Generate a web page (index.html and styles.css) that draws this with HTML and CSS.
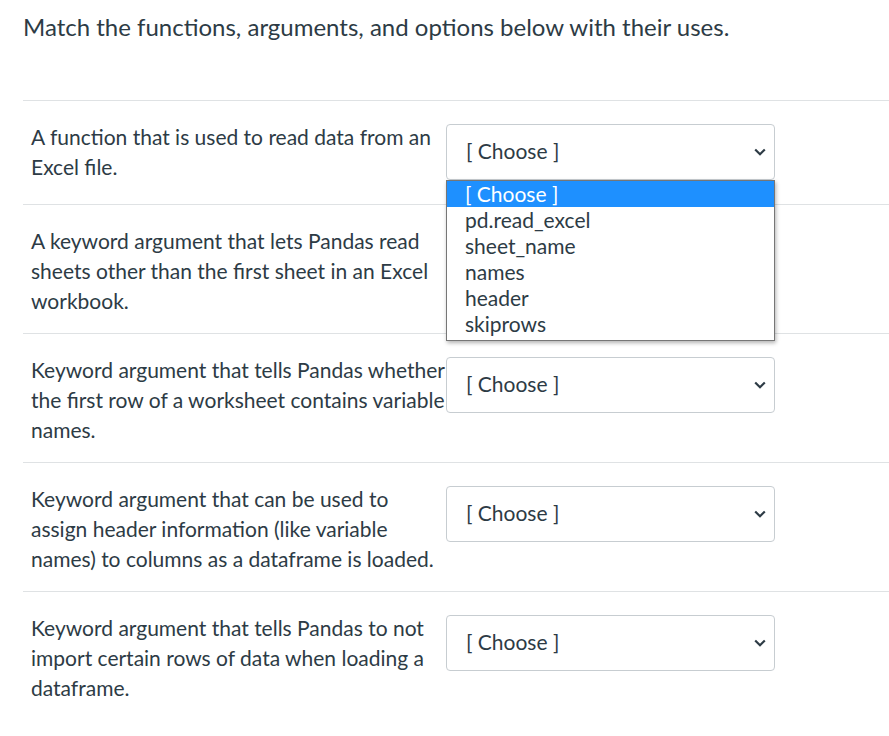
FILE: index.html
```html
<!DOCTYPE html>
<html lang="en">
<head>
    <meta charset="UTF-8">
    <meta name="viewport" content="width=device-width, initial-scale=1.0">
    <title>Matching Question</title>
    <link rel="stylesheet" href="styles.css">
</head>
<body>

    <div class="question">
        <p class="prompt">Match the functions, arguments, and options below with their uses.</p>

        <div class="answers">
            <!-- Row 1 (dropdown open) -->
            <div class="answer">
                <div class="answer-text">A function that is used to read data from an Excel file.</div>
                <div class="answer-select">
                    <div class="select">
                        <span>[ Choose ]</span>
                        <svg class="chevron" width="12" height="8" viewBox="0 0 12 8"><path d="M1.2 1.5 L6 6.2 L10.8 1.5" fill="none" stroke="#2d3b45" stroke-width="2.2"/></svg>
                    </div>
                    <ul class="options">
                        <li class="selected">[ Choose ]</li>
                        <li>pd.read_excel</li>
                        <li>sheet_name</li>
                        <li>names</li>
                        <li>header</li>
                        <li>skiprows</li>
                    </ul>
                </div>
            </div>

            <!-- Row 2 -->
            <div class="answer">
                <div class="answer-text">A keyword argument that lets Pandas read sheets other than the first sheet in an Excel workbook.</div>
                <div class="answer-select"></div>
            </div>

            <!-- Row 3 -->
            <div class="answer">
                <div class="answer-text">Keyword argument that tells Pandas whether the first row of a worksheet contains variable names.</div>
                <div class="answer-select">
                    <div class="select">
                        <span>[ Choose ]</span>
                        <svg class="chevron" width="12" height="8" viewBox="0 0 12 8"><path d="M1.2 1.5 L6 6.2 L10.8 1.5" fill="none" stroke="#2d3b45" stroke-width="2.2"/></svg>
                    </div>
                </div>
            </div>

            <!-- Row 4 -->
            <div class="answer">
                <div class="answer-text">Keyword argument that can be used to assign header information (like variable names) to columns as a dataframe is loaded.</div>
                <div class="answer-select">
                    <div class="select">
                        <span>[ Choose ]</span>
                        <svg class="chevron" width="12" height="8" viewBox="0 0 12 8"><path d="M1.2 1.5 L6 6.2 L10.8 1.5" fill="none" stroke="#2d3b45" stroke-width="2.2"/></svg>
                    </div>
                </div>
            </div>

            <!-- Row 5 -->
            <div class="answer">
                <div class="answer-text">Keyword argument that tells Pandas to not import certain rows of data when loading a dataframe.</div>
                <div class="answer-select">
                    <div class="select">
                        <span>[ Choose ]</span>
                        <svg class="chevron" width="12" height="8" viewBox="0 0 12 8"><path d="M1.2 1.5 L6 6.2 L10.8 1.5" fill="none" stroke="#2d3b45" stroke-width="2.2"/></svg>
                    </div>
                </div>
            </div>
        </div>
    </div>

</body>
</html>
```

FILE: styles.css
```css
body {
    font-family: Lato, "Open Sans", sans-serif;
    color: #2d3b45;
    background-color: #ffffff;
    margin: 0;
    overflow: hidden;
}

.question {
    padding-left: 23px;
}

.prompt {
    font-size: 24px;
    line-height: 30px;
    margin: 12px 0 58px 0;
}

.answer {
    display: flex;
    border-top: 1px solid #dfe2e4;
    padding: 21px 0 17px 8px;
}

.answer-text {
    width: 415px;
    flex-shrink: 0;
    font-size: 21px;
    line-height: 30px;
}

.answer-select {
    position: relative;
    width: 329px;
    padding: 2px 0 7px 0;
}

.select {
    box-sizing: border-box;
    height: 56px;
    border: 1px solid #c7cdd1;
    border-radius: 4px;
    display: flex;
    align-items: center;
    justify-content: space-between;
    padding: 0 8px 3px 19px;
    font-size: 21px;
}

.chevron {
    margin-top: 3px;
}

.options {
    position: absolute;
    top: 58px;
    left: 0;
    width: 329px;
    box-sizing: border-box;
    margin: 0;
    padding: 0 0 3px 0;
    list-style: none;
    background-color: #ffffff;
    border: 1px solid #767676;
    box-shadow: 1px 2px 4px rgba(0, 0, 0, 0.3);
    font-size: 21px;
    z-index: 2;
}

.options li {
    height: 26px;
    line-height: 25px;
    padding-left: 18px;
}

.options li.selected {
    background-color: #1e90ff;
    color: #ffffff;
}
```
